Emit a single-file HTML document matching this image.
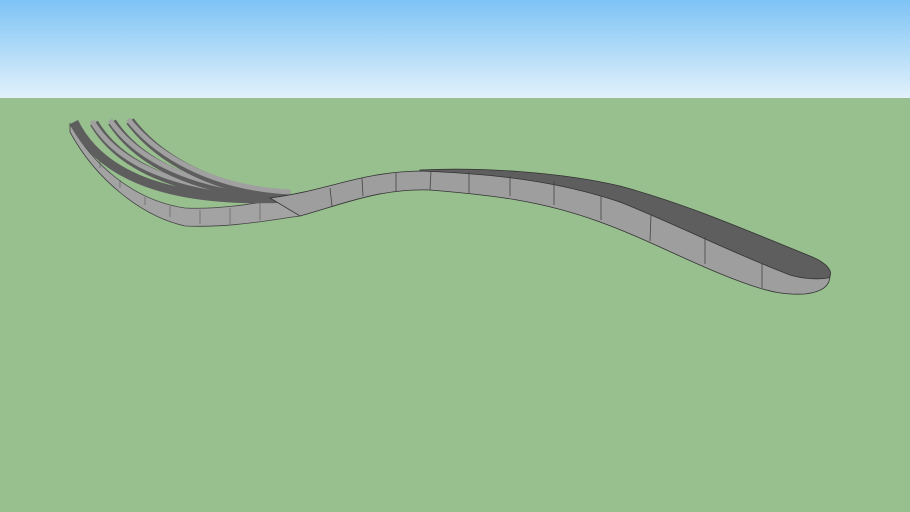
<!DOCTYPE html>
<html><head><style>
html,body{margin:0;padding:0;width:910px;height:512px;overflow:hidden;background:#98bf8e}
.sky{position:absolute;left:0;top:0;width:910px;height:98px;background:linear-gradient(#7dc3f5,#e2f1fb)}
svg{position:absolute;left:0;top:0}
</style></head><body>
<div class="sky"></div>
<svg width="910" height="512" viewBox="0 0 910 512">
<!-- head side band -->
<path d="M70,124 C90,160 130,200 185,208 C230,210 270,200 300,196 L300,216 C270,220 230,228 185,226 C140,216 95,178 70,132 Z" fill="#a3a3a3" stroke="#444" stroke-width="0.8"/>
<g stroke="#555" stroke-width="0.6">
<line x1="100" y1="168" x2="100" y2="158"/><line x1="120" y1="188" x2="120" y2="180"/><line x1="145" y1="205" x2="145" y2="197"/><line x1="170" y1="217" x2="170" y2="206"/><line x1="200" y1="224" x2="200" y2="210"/><line x1="230" y1="224" x2="230" y2="208"/><line x1="260" y1="220" x2="260" y2="202"/>
</g>
<!-- tines -->
<g fill="none">
<path d="M74,122 C95,165 150,205 290,198" stroke="#5e5e5e" stroke-width="9"/>
<path d="M94,123 C117,162 172,196 290,197" stroke="#5e5e5e" stroke-width="9"/>
<path d="M92,121 C115,160 170,193 290,194" stroke="#a0a0a0" stroke-width="5"/>
<path d="M112,122 C137,160 192,193 290,196" stroke="#5e5e5e" stroke-width="9"/>
<path d="M110,120 C135,157 190,190 290,193" stroke="#a0a0a0" stroke-width="5"/>
<path d="M130,121 C157,157 212,191 290,195" stroke="#5e5e5e" stroke-width="9"/>
<path d="M128,119 C155,154 210,188 290,192" stroke="#a0a0a0" stroke-width="5"/>
</g>
<!-- neck + handle side -->
<path d="M270,198 C330,190 360,172 420,171 C500,172 560,180 620,202 C680,222 730,250 790,274 C810,280 825,278 830,276 C830,286 822,292 805,294 C785,295 770,292 750,285 C700,268 650,240 600,222 C540,200 490,195 430,190 C380,188 340,205 300,216 Z" fill="#9e9e9e" stroke="#333" stroke-width="0.8"/>
<!-- handle top dark -->
<path d="M420,170 C480,167 560,172 620,186 C690,205 750,232 810,256 C830,264 834,274 828,278 C815,280 800,278 790,275 C730,252 680,226 620,202 C560,182 500,174 420,171 Z" fill="#5e5e5e" stroke="#333" stroke-width="0.8"/>
<g stroke="#444" stroke-width="0.8">
<line x1="330" y1="188" x2="332" y2="206"/><line x1="362" y1="178" x2="363" y2="196"/>
<line x1="396" y1="173" x2="396" y2="191"/><line x1="431" y1="171" x2="430" y2="190"/>
<line x1="469" y1="172" x2="469" y2="193"/><line x1="510" y1="176" x2="510" y2="196"/>
<line x1="554" y1="181" x2="554" y2="205"/><line x1="601" y1="196" x2="601" y2="220"/>
<line x1="651" y1="215" x2="650" y2="241"/><line x1="705" y1="237" x2="705" y2="264"/>
<line x1="762" y1="263" x2="762" y2="288"/>
</g>
</svg>
</body></html>
